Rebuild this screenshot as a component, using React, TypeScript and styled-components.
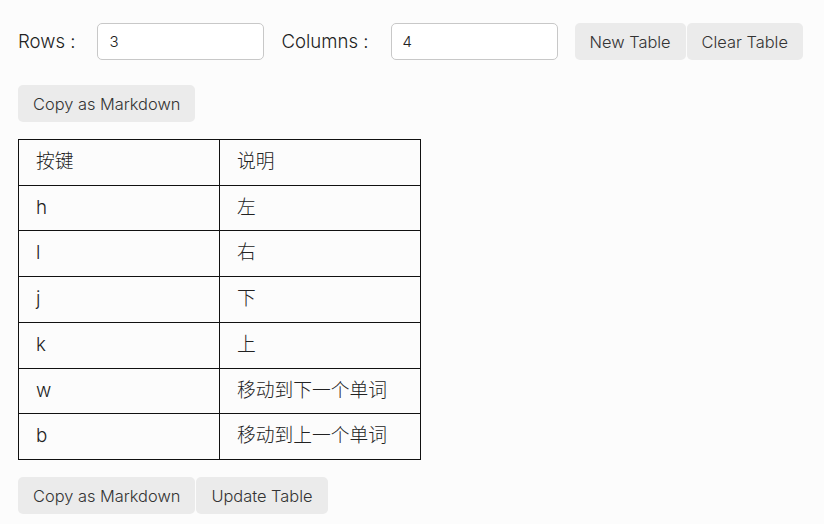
import { useState } from "react";
import styled, { createGlobalStyle } from "styled-components";

const GlobalStyle = createGlobalStyle`
    html, body {
        margin: 0;
        padding: 0;
        background: #fcfcfc;
    }
    body {
        font-family: Inter, "Noto Sans CJK SC", sans-serif;
        color: #222;
    }
`;

const Page = styled.main`
    padding: 23px 18px;
    display: flex;
    flex-direction: column;
    align-items: flex-start;
`;

const Toolbar = styled.div`
    display: flex;
    align-items: center;
    height: 36px;
`;

const Label = styled.label`
    font-size: 18.6px;
    font-weight: 300;
    color: #222;
    margin-right: 22px;
`;

const SizeInput = styled.input`
    box-sizing: border-box;
    width: 167px;
    height: 37px;
    padding: 0 11px;
    margin-right: 17px;
    border: 1px solid #c8c8c8;
    border-radius: 5px;
    background: #fff;
    font-family: Inter, sans-serif;
    font-size: 15px;
    font-weight: 300;
    color: #222;
    outline: none;
`;

const ButtonGroup = styled.div<{ $top: number }>`
    display: flex;
    gap: 1px;
    margin-top: ${(p) => p.$top}px;
`;

const Button = styled.button`
    box-sizing: border-box;
    height: 37px;
    padding: 1px 15px 0;
    border: none;
    border-radius: 5px;
    background: #ebebeb;
    font-family: Inter, sans-serif;
    font-size: 16.4px;
    font-weight: 300;
    color: #333;
    cursor: pointer;
`;

const Grid = styled.table`
    margin-top: 17px;
    border-collapse: collapse;
    width: 403px;
    table-layout: fixed;
`;

const Cell = styled.td`
    border: 1px solid #111;
    padding: 8px 17px;
    height: 28.7px;
    font-size: 18.75px;
    font-weight: 300;
    line-height: 28.7px;
    font-family: Inter, "Noto Sans CJK SC", sans-serif;
    color: #222;
`;

const rows = [
    ["按键", "说明"],
    ["h", "左"],
    ["l", "右"],
    ["j", "下"],
    ["k", "上"],
    ["w", "移动到下一个单词"],
    ["b", "移动到上一个单词"],
];

export default function App() {
    const [rowCount, setRowCount] = useState("3");
    const [colCount, setColCount] = useState("4");

    return (
        <>
            <GlobalStyle />
            <Page>
                <Toolbar>
                    <Label>Rows :</Label>
                    <SizeInput value={rowCount} onChange={(e) => setRowCount(e.target.value)} />
                    <Label>Columns :</Label>
                    <SizeInput value={colCount} onChange={(e) => setColCount(e.target.value)} />
                    <ButtonGroup $top={0}>
                        <Button>New Table</Button>
                        <Button>Clear Table</Button>
                    </ButtonGroup>
                </Toolbar>
                <ButtonGroup $top={26}>
                    <Button>Copy as Markdown</Button>
                </ButtonGroup>
                <Grid>
                    <tbody>
                        {rows.map((r, i) => (
                            <tr key={i}>
                                {r.map((c, j) => (
                                    <Cell key={j}>{c}</Cell>
                                ))}
                            </tr>
                        ))}
                    </tbody>
                </Grid>
                <ButtonGroup $top={17}>
                    <Button>Copy as Markdown</Button>
                    <Button>Update Table</Button>
                </ButtonGroup>
            </Page>
        </>
    );
}
